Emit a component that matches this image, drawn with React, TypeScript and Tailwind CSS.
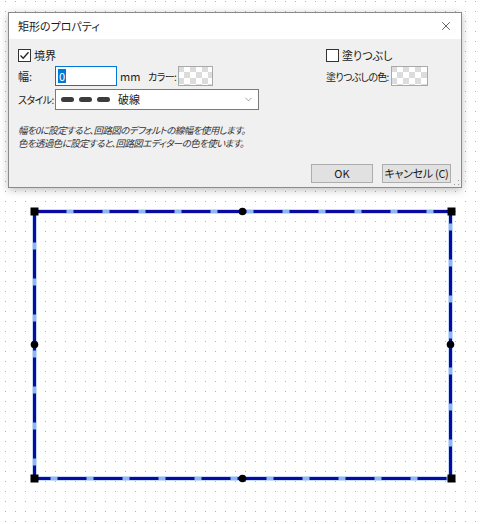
import { X, ChevronDown } from 'lucide-react';

const font = { fontFamily: '"Noto Sans CJK JP", "Noto Sans", sans-serif', fontFeatureSettings: '"palt"' };

function CheckBox({ checked }: { checked: boolean }) {
  return (
    <svg width="13" height="13" viewBox="0 0 13 13" className="shrink-0">
      <rect x="0.5" y="0.5" width="12" height="12" fill="#fff" stroke="#333" />
      {checked && <path d="M2.5 6.5 L5.2 9.2 L10.5 3.2" fill="none" stroke="#222" strokeWidth="1.3" />}
    </svg>
  );
}

function Swatch({ id, w }: { id: string; w: number }) {
  return (
    <svg width={w} height="20" className="shrink-0">
      <defs>
        <pattern id={id} width="12" height="12" patternUnits="userSpaceOnUse">
          <rect width="12" height="12" fill="#fff" />
          <rect width="6" height="6" fill="#dcdcdc" />
          <rect x="6" y="6" width="6" height="6" fill="#dcdcdc" />
        </pattern>
      </defs>
      <rect x="0.5" y="0.5" width={w - 1} height="19" fill={`url(#${id})`} stroke="#a9a9a9" />
    </svg>
  );
}

function Canvas() {
  return (
    <svg width="485" height="524" className="absolute inset-0">
      <defs>
        <pattern id="dots" x="5" y="1" width="10" height="10" patternUnits="userSpaceOnUse">
          <rect width="1" height="1" fill="#b4b4b4" />
        </pattern>
      </defs>
      <rect width="485" height="524" fill="#fff" />
      <rect width="485" height="524" fill="url(#dots)" />
      <rect x="34.5" y="211.5" width="416" height="267" fill="none" stroke="#8cb8f4" strokeWidth="4" />
      <rect x="34.5" y="211.5" width="416" height="267" fill="none" stroke="#0a0aa0" strokeWidth="3" strokeDasharray="29 7" strokeDashoffset="-3" />
      {[[34, 211], [451, 211], [34, 478], [451, 478]].map(([x, y]) => (
        <rect key={`${x}-${y}`} x={x - 3.5} y={y - 3.5} width="8" height="8" fill="#000" />
      ))}
      {[[242.5, 211.5], [34.5, 344.5], [450.5, 344.5], [242.5, 478.5]].map(([x, y]) => (
        <circle key={`${x}-${y}`} cx={x} cy={y} r="3.8" fill="#000" />
      ))}
    </svg>
  );
}

export default function App() {
  return (
    <div className="relative w-[485px] h-[524px] overflow-hidden bg-white text-[11px] text-[#1a1a1a] whitespace-nowrap" style={font}>
      <Canvas />
      <div className="absolute left-[8px] top-[12px] w-[454px] h-[176px] flex flex-col border border-[#8a8a8a] bg-[#f0f0f0] shadow-[0_2px_8px_rgba(0,0,0,0.25)]">
        <div className="h-[26px] bg-white flex items-center justify-between pl-[9px] pr-[8px]">
          <span className="text-[11px]">矩形のプロパティ</span>
          <X size={14} strokeWidth={1.2} className="text-[#222]" />
        </div>
        <div className="flex-1 flex flex-col pl-[9px] pr-[9px] pt-[8px] relative">
          <div className="flex justify-between">
            <div className="flex flex-col">
              <div className="flex items-center gap-[3px] h-[16px]">
                <CheckBox checked />
                <span>境界</span>
              </div>
              <div className="flex items-center h-[20px] mt-[3px]">
                <span className="w-[37px] shrink-0">幅:</span>
                <div className="w-[62px] h-[20px] border border-[#0078d7] bg-white flex items-center pl-[2px]">
                  <span className="bg-[#0078d7] text-white leading-[14px] px-[1px]">0</span>
                </div>
                <span className="ml-[3px] w-[28px] shrink-0">mm</span>
                <span className="w-[30px] shrink-0 tracking-[-0.6px] text-[10px]">カラー:</span>
                <Swatch id="sw1" w={35} />
              </div>
              <div className="flex items-center h-[21px] mt-[3px]">
                <span className="w-[37px] shrink-0 tracking-[-0.6px] text-[10px]">スタイル:</span>
                <div className="w-[204px] h-[21px] border border-[#7a7a7a] bg-white flex items-center pl-[5px] pr-[4px]">
                  <div className="flex gap-[5px]">
                    <span className="w-[13px] h-[5px] rounded-full bg-[#3c3c3c]" />
                    <span className="w-[13px] h-[5px] rounded-full bg-[#3c3c3c]" />
                    <span className="w-[13px] h-[5px] rounded-full bg-[#3c3c3c]" />
                  </div>
                  <span className="ml-[8px] flex-1">破線</span>
                  <ChevronDown size={11} strokeWidth={1.2} className="text-[#555]" />
                </div>
              </div>
            </div>
            <div className="flex flex-col w-[108px] mr-[18px]">
              <div className="flex items-center gap-[3px] h-[16px]">
                <CheckBox checked={false} />
                <span>塗りつぶし</span>
              </div>
              <div className="flex items-center h-[20px] mt-[3px]">
                <span className="w-[65px] shrink-0 tracking-[-0.7px] text-[10px]">塗りつぶしの色:</span>
                <Swatch id="sw2" w={37} />
              </div>
            </div>
          </div>
          <div className="mt-[14px] italic text-[9.5px] leading-[13px] text-[#333] tracking-[-0.6px]">
            <div>幅を0に設定すると、回路図のデフォルトの線幅を使用します。</div>
            <div>色を透過色に設定すると、回路図エディターの色を使います。</div>
          </div>
          <div className="absolute right-[10px] bottom-[4px] flex gap-[9px]">
            <button className="w-[62px] h-[19px] bg-[#e1e1e1] border border-[#adadad] text-[11px] leading-none">OK</button>
            <button className="w-[69px] h-[19px] bg-[#e1e1e1] border border-[#adadad] text-[11px] leading-none tracking-[-0.3px]">キャンセル (C)</button>
          </div>
          <svg width="8" height="8" className="absolute right-[1px] bottom-[1px]">
            {[[6, 2], [6, 6], [2, 6]].map(([x, y]) => (
              <rect key={`${x}${y}`} x={x} y={y} width="1" height="1" fill="#999" />
            ))}
          </svg>
        </div>
      </div>
    </div>
  );
}
